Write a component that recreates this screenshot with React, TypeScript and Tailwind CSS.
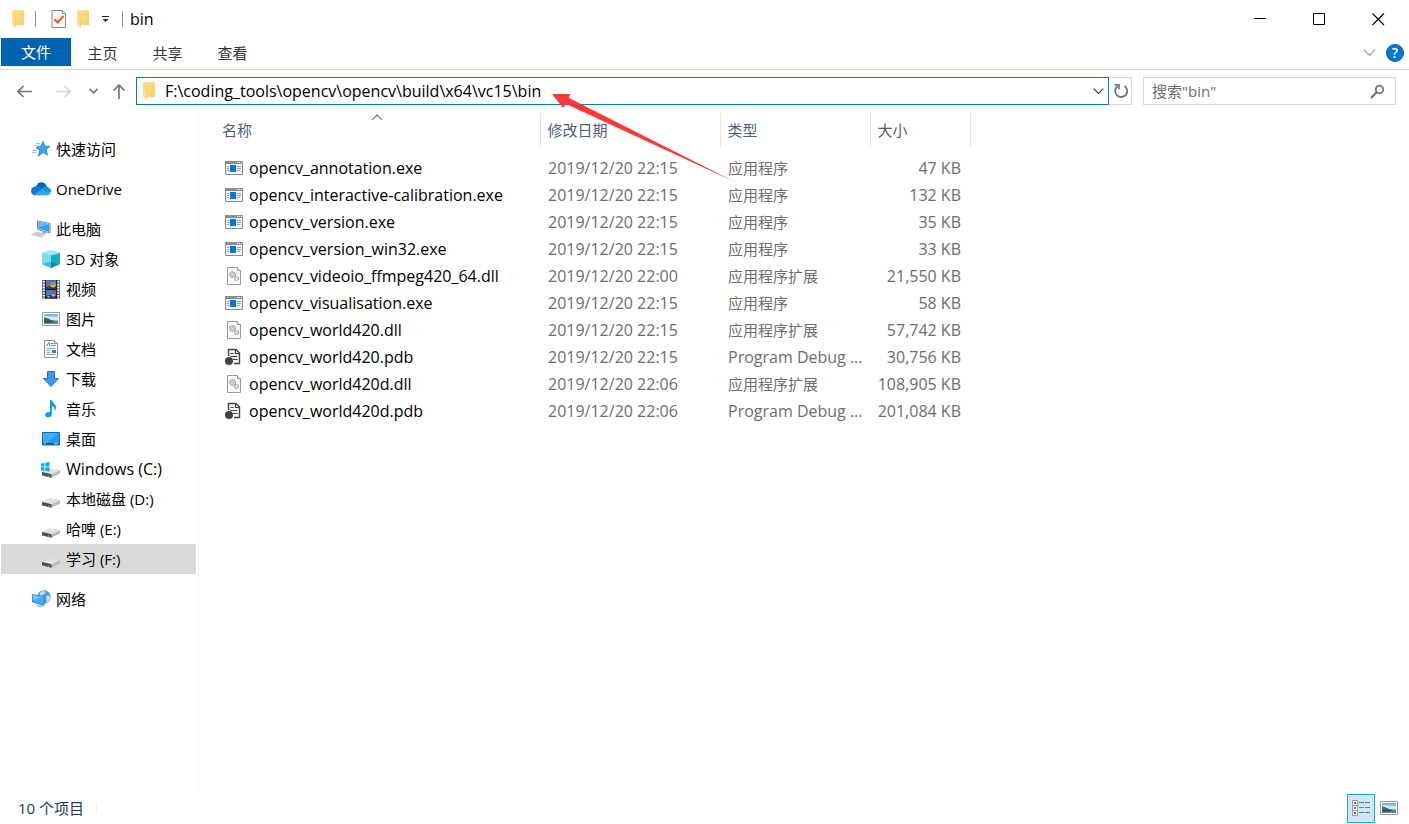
import React from 'react';

type IconProps = { className?: string };

const FolderIcon = ({ className = '' }: IconProps) => (
  <svg width="14" height="18" viewBox="0 0 14 18" className={`shrink-0 ${className}`} aria-hidden="true">
    <defs>
      <linearGradient id="folder-body" x1="0" y1="0" x2="1" y2="1">
        <stop offset="0" stopColor="#fde491" />
        <stop offset="1" stopColor="#f5cd68" />
      </linearGradient>
    </defs>
    <path d="M1 0h11l1 1v14H1z" fill="url(#folder-body)" />
    <path d="M1 0.5l2.5 2V8l1 1v8.5L1 15.5z" fill="#fbe093" />
    <path d="M3.5 2.5V8l1 1v8.5" fill="none" stroke="#edc45c" strokeWidth="0.6" />
  </svg>
);

const CheckDocIcon = () => (
  <svg width="16" height="18" viewBox="0 0 16 18" aria-hidden="true">
    <path d="M1 .5h10.5l3 3v14H1z" fill="#f7f7f7" stroke="#8b8b8b" />
    <path d="M11.500 .5v3h3" fill="#fff" stroke="#8b8b8b" />
    <path d="M3.500 9.300l3 3.200L12.500 6" fill="none" stroke="#f1571c" strokeWidth="2" />
  </svg>
);

const StarIcon = () => (
  <svg width="18" height="18" viewBox="0 0 18 18" aria-hidden="true">
    <path d="M11 1.500l1.800 4.700 5 .2-3.800 3.200 1.500 5.200-4.400-2.500-4.600 3.800 1.300-5.500L4.200 7.300l4.900-.7z" fill="#39aaf0" stroke="#1680c8" strokeWidth=".9" />
    <path d="M4 3.500h4M2 5.500h5M.5 10.500h5M0 12.500h4" stroke="#7fc4f3" strokeWidth=".9" />
  </svg>
);

const OneDriveIcon = () => (
  <svg width="20" height="14" viewBox="0 0 20 14" aria-hidden="true">
    <path d="M5 5C6 2 8-.1 10.500 .2c2.600 0 4.700 2 5.300 4.300L12 9z" fill="#0364b8" />
    <path d="M4.500 13.300C2 13.300 0 11.500 0 9c0-2.400 2-4.300 4.500-4.400C6 4 8 4.200 9.500 5.500L15 9z" fill="#0f78d4" />
    <path d="M9 8l4-3.200c1.500-.8 3.500-.4 4.500 1 1.800.6 2.700 1.900 2.500 4l-3 1z" fill="#1490df" />
    <path d="M2.500 12.900L10.800 7.200 19.700 10.500c-.4 1.800-1.700 2.800-3.700 2.800H4.500c-.8 0-1.400-.1-2-.4z" fill="#28a8ea" />
  </svg>
);

const ComputerIcon = () => (
  <svg width="20" height="18" viewBox="0 0 20 18" aria-hidden="true">
    <path d="M6.500 1l12.500 2.500v9.500L6.500 9.500z" fill="#fff" stroke="#6f7b85" strokeWidth=".9" />
    <path d="M7.300 2l11 2.200v7.700L7.300 8.800z" fill="#2fa0ee" />
    <path d="M7.300 2l11 2.200-11 3z" fill="#63bdf7" />
    <path d="M.5 14.500L5 12l9.500 2-4 3z" fill="#dfe3e6" stroke="#adb3b8" strokeWidth=".6" />
    <path d="M3 14.300l7.500 1.700M5 13.200l7.500 1.600" stroke="#9fa6ab" strokeWidth=".5" />
    <path d="M12 11.500l4 1-2 1.200-3-.7z" fill="#a8aeb3" />
  </svg>
);

const CubeIcon = () => (
  <svg width="18" height="18" viewBox="0 0 18 18" aria-hidden="true">
    <path d="M0 3l9-3 9 3v11l-9 4-9-4z" fill="#5fd0e4" />
    <path d="M0 3l9 2.500L18 3 9 0z" fill="#a5e8f2" />
    <path d="M0 3l9 2.500v6L0 14z" fill="#7bdcea" />
    <path d="M9 5.500L18 3v11l-9-2.500z" fill="#19abc9" />
    <path d="M0 14l9-2.500V18z" fill="#3fc0d8" />
    <path d="M9 11.500l9 2.500-9 4z" fill="#0e8daa" />
  </svg>
);

const VideoIcon = () => (
  <svg width="18" height="19" viewBox="0 0 18 19" aria-hidden="true">
    <path d="M0 0h18v19H0z" fill="#66696c" />
    <path d="M3.500 0v19M14.500 0v19" stroke="#1d1d1d" />
    <path d="M1.800 1v18M16.200 1v18" stroke="#fff" strokeWidth="1.800" strokeDasharray="1.600 1.200" />
    <path d="M4 1h10v8H4zM4 10h10v8.500H4z" fill="#3f7fdc" />
    <path d="M4 6.500l3-1 3 1.500 4-1V9H4zM4 16l4-1 6 1v2.500H4z" fill="#28386c" />
    <circle cx="11" cy="5" r="2.600" fill="#e3b51c" />
    <path d="M9.500 3.500h3v1.500h-3z" fill="#3fa04a" />
    <circle cx="6" cy="6" r="1.500" fill="#d74235" />
    <circle cx="12" cy="11.500" r="1.700" fill="#c73c2c" />
    <path d="M10 14.500h2.500v2H10zM5.500 16h2v1.500h-2z" fill="#e6bd2c" />
    <path d="M4 9.500h10" stroke="#171717" />
  </svg>
);

const PictureIcon = () => (
  <svg width="18" height="14" viewBox="0 0 18 14" aria-hidden="true">
    <path d="M.5 .5h17v13H.5z" fill="#fff" stroke="#9b9b9b" />
    <path d="M2 2h14v10H2z" fill="#7db4ee" />
    <path d="M2 4.500c3-1.500 5 .5 7 0s4 1 7 0V8H2z" fill="#d8eaf8" />
    <path d="M2 5.500c3 0 5 1.500 7.500 2.800L13 9H2z" fill="#44694f" />
    <path d="M2 9h14v3H2z" fill="#5e8797" />
    <path d="M2 9h8l3 .7-6 .8H2z" fill="#2c5045" />
  </svg>
);

const DocumentIcon = () => (
  <svg width="18" height="18" viewBox="0 0 18 18" aria-hidden="true">
    <path d="M2.500 .5h10l3 3v14h-13z" fill="#fdfdfd" stroke="#919191" />
    <path d="M12.500 .5v3h3" fill="#e6e6e6" stroke="#919191" />
    <path d="M4.500 6l2-3h1v3M9 3.500h2.500M9 5.500h4.500" stroke="#2c96d6" fill="none" />
    <path d="M4.500 8.500h9M4.500 10.500h4M4.500 12.500h4M4.500 14.500h9" stroke="#7eaec9" />
    <path d="M10 10h4v3h-4z" fill="#3c7dac" />
  </svg>
);

const DownloadIcon = () => (
  <svg width="18" height="18" viewBox="0 0 18 18" aria-hidden="true">
    <path d="M5.500 1.500h7v7h4L9 16.500 1.500 8.500h4z" fill="#3c98e8" stroke="#2476bf" />
  </svg>
);

const MusicIcon = () => (
  <svg width="18" height="18" viewBox="0 0 18 18" aria-hidden="true">
    <path d="M8 0h1.700c.3 2.600 4.500 4 4.300 7.500-.1 1.500-.6 2.600-1.400 3.500.3-2.800-.6-4.300-2.700-5v8c0 2-1.500 3.300-3.600 3.300-1.900 0-3.200-1-3.200-2.400 0-1.700 1.600-2.800 3.500-2.800.5 0 1 .1 1.400.2z" fill="#0d99f2" />
  </svg>
);

const DesktopIcon = () => (
  <svg width="18" height="14" viewBox="0 0 18 14" aria-hidden="true">
    <path d="M.5 .5h17v12.500H.5z" fill="#1b9cf4" stroke="#0f6cb5" />
    <path d="M1 1h15L5 11H1z" fill="#3eb0fb" />
    <path d="M1 11h16v1.500H1z" fill="#11507f" />
    <path d="M2 11.800h1.500M12 11.800h4" stroke="#fff" strokeWidth=".8" />
  </svg>
);

const DriveIcon = ({ system = false }: { system?: boolean }) => (
  <svg width="18" height="18" viewBox="0 0 18 18" aria-hidden="true">
    <path d="M0 12l8-3.500 10 1.800v3.200l-8.500 4.300L0 15.300z" fill="#b9bbbd" />
    <path d="M0 12l8-3.500 10 1.800-8.500 4z" fill="#e2e3e5" />
    <path d="M0 12l9.500 2.300v3.500L0 15.300z" fill="#4c4f51" />
    <path d="M6 15.200l2 .5v1l-2-.5z" fill="#37d04a" />
    {system && (
      <path d="M-1 3.500l3.500-.6v3.600H-1zM3.300 2.700L7.500 2v4.500H3.300zM-1 7.300h3.500v3.600L-1 10.300zM3.300 7.300h4.200v4.300l-4.200-.6z" fill="#00b3f0" />
    )}
  </svg>
);

const NetworkIcon = () => (
  <svg width="19" height="18" viewBox="0 0 19 18" aria-hidden="true">
    <circle cx="12" cy="7" r="6.800" fill="#4b9dcb" />
    <path d="M9 1.500c3-1.500 5 0 4.500 1.500s-3 1-3 3-3-1-3-2.500zM14 6c2-1 4-.5 4.500 1.500-.5 3-2.500 5-4 5.500z" fill="#b7deee" />
    <path d="M.5 4.500l11.500 2v9L.5 12z" fill="#3eaef6" stroke="#2a7eb8" strokeWidth=".8" />
    <path d="M1 5l10.500 1.900L1 10z" fill="#6ec6fa" />
    <path d="M4 15.500l3-1 4 1.500-3 1.500z" fill="#b0b5b9" />
  </svg>
);

const ExeIcon = () => (
  <svg width="18" height="14" viewBox="0 0 18 14" aria-hidden="true">
    <path d="M.5 .5h17v13H.5z" fill="#f5f5f5" stroke="#8a8d90" />
    <path d="M0 0h18v3H0z" fill="#8a8d90" />
    <path d="M12 1.500h1M14 1.500h1M16 1.500h1" stroke="#fff" />
    <path d="M5 4h6v7H5z" fill="#0078d7" />
    <path d="M2 5.500h2M2 7.500h2M2 9.500h2M12 5.500h4M12 7.500h4M12 9.500h3" stroke="#9a9da0" />
  </svg>
);

const DllIcon = () => (
  <svg width="18" height="18" viewBox="0 0 18 18" aria-hidden="true">
    <path d="M2.500 .5h10l3 3v14h-13z" fill="#f9f9f9" stroke="#9a9a9a" />
    <path d="M12.500 .5v3h3" fill="#fff" stroke="#9a9a9a" />
    <circle cx="7.500" cy="7.500" r="2.700" fill="none" stroke="#8d8d8d" strokeWidth="1.300" strokeDasharray="1.200 .5" />
    <circle cx="7.500" cy="7.500" r="1" fill="none" stroke="#8d8d8d" strokeWidth=".7" />
    <circle cx="11.500" cy="11.500" r="1.900" fill="#e2f0f9" stroke="#6ba9cf" strokeWidth="1.200" strokeDasharray="1.200 .4" />
  </svg>
);

const PdbIcon = () => (
  <svg width="18" height="18" viewBox="0 0 18 18" aria-hidden="true">
    <path d="M3.500 8V1.500h7.500L14.500 5v10.500H9" fill="#f3f3f3" stroke="#424242" strokeWidth="1.400" />
    <path d="M10.500 1.500V5.500h4" fill="none" stroke="#424242" strokeWidth="1.200" />
    <path d="M5.500 5.500h3M5.500 8.500h6.500M8 11.500h4.500" stroke="#424242" strokeWidth="1.200" />
    <circle cx="4" cy="13" r="4" fill="#424242" />
  </svg>
);

const Chevron = ({ className = '', size = 10 }: IconProps & { size?: number }) => (
  <svg width={size} height={size / 2 + 1} viewBox="0 0 10 6" className={className} aria-hidden="true">
    <path d="M.5 .5L5 5 9.500 .5" fill="none" stroke="currentColor" strokeWidth="1" />
  </svg>
);

const fileIcons = { exe: <ExeIcon />, dll: <DllIcon />, pdb: <PdbIcon /> };

const fileTypes = { exe: '应用程序', dll: '应用程序扩展', pdb: 'Program Debug ...' };

const files: { name: string; kind: keyof typeof fileTypes; date: string; size: string }[] = [
  { name: 'opencv_annotation.exe', kind: 'exe', date: '2019/12/20 22:15', size: '47 KB' },
  { name: 'opencv_interactive-calibration.exe', kind: 'exe', date: '2019/12/20 22:15', size: '132 KB' },
  { name: 'opencv_version.exe', kind: 'exe', date: '2019/12/20 22:15', size: '35 KB' },
  { name: 'opencv_version_win32.exe', kind: 'exe', date: '2019/12/20 22:15', size: '33 KB' },
  { name: 'opencv_videoio_ffmpeg420_64.dll', kind: 'dll', date: '2019/12/20 22:00', size: '21,550 KB' },
  { name: 'opencv_visualisation.exe', kind: 'exe', date: '2019/12/20 22:15', size: '58 KB' },
  { name: 'opencv_world420.dll', kind: 'dll', date: '2019/12/20 22:15', size: '57,742 KB' },
  { name: 'opencv_world420.pdb', kind: 'pdb', date: '2019/12/20 22:15', size: '30,756 KB' },
  { name: 'opencv_world420d.dll', kind: 'dll', date: '2019/12/20 22:06', size: '108,905 KB' },
  { name: 'opencv_world420d.pdb', kind: 'pdb', date: '2019/12/20 22:06', size: '201,084 KB' },
];

const places = [
  { label: '快速访问', icon: <StarIcon /> },
  { label: 'OneDrive', icon: <OneDriveIcon /> },
  {
    label: '此电脑',
    icon: <ComputerIcon />,
    children: [
      { label: '3D 对象', icon: <CubeIcon /> },
      { label: '视频', icon: <VideoIcon /> },
      { label: '图片', icon: <PictureIcon /> },
      { label: '文档', icon: <DocumentIcon /> },
      { label: '下载', icon: <DownloadIcon /> },
      { label: '音乐', icon: <MusicIcon /> },
      { label: '桌面', icon: <DesktopIcon /> },
      { label: 'Windows (C:)', icon: <DriveIcon system />, latin: true },
      { label: '本地磁盘 (D:)', icon: <DriveIcon /> },
      { label: '哈啤 (E:)', icon: <DriveIcon /> },
      { label: '学习 (F:)', icon: <DriveIcon />, selected: true },
    ],
  },
  { label: '网络', icon: <NetworkIcon /> },
];

const TitleBar = () => (
  <header className="flex h-[38px] items-center pl-[11px] pr-px">
    <FolderIcon />
    <span className="ml-2.5 h-4 w-px bg-[#8f8f8f]" />
    <button type="button" aria-label="属性" className="ml-[15px]">
      <CheckDocIcon />
    </button>
    <button type="button" aria-label="新建文件夹" className="ml-[9px]">
      <FolderIcon />
    </button>
    <button type="button" aria-label="自定义快速访问工具栏" className="ml-3">
      <svg width="8" height="8" viewBox="0 0 8 8" aria-hidden="true">
        <path d="M0 1.500h7" stroke="#222" />
        <path d="M.5 4h6L3.500 7z" fill="#222" />
      </svg>
    </button>
    <span className="ml-3 h-4 w-px bg-[#8f8f8f]" />
    <h1 className="ml-[7px] flex-1 text-base leading-5 text-black">bin</h1>
    <button type="button" aria-label="最小化" className="flex h-full w-[59px] items-center justify-center">
      <svg width="13" height="13" viewBox="0 0 13 13" aria-hidden="true">
        <path d="M0 5.500h12" stroke="#000" />
      </svg>
    </button>
    <button type="button" aria-label="最大化" className="flex h-full w-[59px] items-center justify-center">
      <svg width="13" height="13" viewBox="0 0 13 13" aria-hidden="true">
        <path d="M.5 .5h11v11H.5z" fill="none" stroke="#000" />
      </svg>
    </button>
    <button type="button" aria-label="关闭" className="flex h-full w-[59px] items-center justify-center">
      <svg width="13" height="13" viewBox="0 0 13 13" aria-hidden="true">
        <path d="M.5 .5l11.500 11.500M12 .5L.5 12" stroke="#000" strokeWidth="1.100" />
      </svg>
    </button>
  </header>
);

const Ribbon = () => (
  <nav className="flex h-8 items-start border-b border-[#dadbdc] pl-px pr-[5px] text-[#333]">
    <button type="button" className="h-7 w-[70px] bg-[#0063b1] text-white">文件</button>
    {['主页', '共享', '查看'].map((tab) => (
      <button key={tab} type="button" className="h-[30px] w-[65px] pr-0.5">{tab}</button>
    ))}
    <div className="flex h-[30px] flex-1 items-center justify-end gap-2.5">
      <button type="button" aria-label="展开功能区">
        <Chevron size={13} className="text-[#a6a6a6]" />
      </button>
      <button
        type="button"
        aria-label="帮助"
        className="flex size-[18px] items-center justify-center rounded-full border border-[#0b5ea5] bg-[#0078d7] text-sm leading-none font-semibold text-white"
      >
        ?
      </button>
    </div>
  </nav>
);

const AddressBar = () => (
  <div className="flex h-[42px] items-center pl-4 pr-[13px] text-[#777]">
    <button type="button" aria-label="后退">
      <svg width="17" height="14" viewBox="0 0 17 14" fill="none" aria-hidden="true">
        <path d="M16 7.500H2M7.500 2L2 7.500 7.500 13" stroke="#757575" strokeWidth="1.700" />
      </svg>
    </button>
    <button type="button" aria-label="前进" className="ml-[22px]">
      <svg width="17" height="14" viewBox="0 0 17 14" fill="none" aria-hidden="true">
        <path d="M1 7.500h14M9.500 2L15 7.500 9.500 13" stroke="#d6d6d6" strokeWidth="1.700" />
      </svg>
    </button>
    <button type="button" aria-label="最近浏览的位置" className="ml-[17px]">
      <svg width="9" height="6" viewBox="0 0 9 6" fill="none" aria-hidden="true">
        <path d="M.5 .8l4 4 4-4" stroke="#777" strokeWidth="1.700" />
      </svg>
    </button>
    <button type="button" aria-label="上移" className="ml-3.5">
      <svg width="14" height="16" viewBox="0 0 14 16" fill="none" aria-hidden="true">
        <path d="M7 16V2M1.500 7.500L7 2l5.500 5.500" stroke="#757575" strokeWidth="1.700" />
      </svg>
    </button>
    <div className="relative ml-2.5 flex h-7 flex-1 items-center border border-[#0078d7] pl-[5px] pr-1">
      <FolderIcon />
      <input
        aria-label="地址"
        defaultValue="F:\coding_tools\opencv\opencv\build\x64\vc15\bin"
        className="ml-[9px] min-w-0 flex-1 text-base leading-5 text-black outline-none"
      />
      <button type="button" aria-label="上一个位置">
        <Chevron className="text-[#333]" size={11} />
      </button>
      {/* callout arrow pointing at the path */}
      <svg width="184" height="90" viewBox="0 0 184 90" className="pointer-events-none absolute top-4 left-[415px] z-10" aria-hidden="true">
        <path d="M0 0L18 0 17 4 183 88 14 10 11 14z" fill="#fc3838" />
      </svg>
    </div>
    <button type="button" aria-label="刷新" className="flex h-7 w-[23px] items-center justify-center border border-l-0 border-[#d9d9d9] pl-px">
      <svg width="16" height="16" viewBox="0 0 16 16" fill="none" aria-hidden="true">
        <path d="M11.500 3A6 6 0 1 1 4.500 3.300" stroke="#757575" strokeWidth="1.900" />
        <path d="M1.500 1.800h4.500v4.500" stroke="#757575" strokeWidth="1.700" />
      </svg>
    </button>
    <div className="ml-[11px] flex h-7 w-[253px] items-center border border-[#d9d9d9] pl-2 pr-2.5">
      <input aria-label="搜索" placeholder={'搜索"bin"'} className="min-w-0 flex-1 outline-none placeholder:text-[#6d6d6d]" />
      <svg width="15" height="15" viewBox="0 0 15 15" fill="none" aria-hidden="true">
        <circle cx="9.500" cy="5.500" r="3.800" stroke="#757575" strokeWidth="1.800" />
        <path d="M7 8L1 14" stroke="#757575" strokeWidth="2.200" />
      </svg>
    </div>
  </div>
);

const Sidebar = () => (
  <nav className="w-[199px] shrink-0 border-r border-[#f0f0f0] pt-[22px] pl-px pr-0.5 text-black">
    <ul className="space-y-2.5">
      {places.map((place) => (
        <li key={place.label}>
          <a href="#" className="flex h-[30px] items-center gap-[5px] pl-[30px]">
            <span className="flex w-5 shrink-0 justify-center">{place.icon}</span>
            {place.label}
          </a>
          {place.children && (
            <ul>
              {place.children.map((child) => (
                <li key={child.label}>
                  <a
                    href="#"
                    className={`flex h-[30px] items-center gap-1.5 pl-[41px] ${'selected' in child ? 'bg-[#d9d9d9]' : ''} ${'latin' in child ? 'text-base leading-5' : ''}`}
                  >
                    <span className="w-[18px] shrink-0 [&>svg]:overflow-visible">{child.icon}</span>
                    {child.label}
                  </a>
                </li>
              ))}
            </ul>
          )}
        </li>
      ))}
    </ul>
  </nav>
);

const FileList = () => (
  <main className="min-w-0 flex-1 pt-px pl-[15px]">
    <table className="w-[756px] table-fixed text-[#6d6d6d]">
      <colgroup>
        <col className="w-[326px]" />
        <col className="w-[180px]" />
        <col className="w-[150px]" />
        <col className="w-[100px]" />
      </colgroup>
      <thead>
        <tr className="h-[34px] text-left text-[#4c607a] [&>th]:border-r [&>th]:border-[#e5e5e5] [&>th]:px-[7px] [&>th]:font-normal">
          <th className="relative">
            <span className="pl-px">名称</span>
            <Chevron size={11} className="absolute top-px left-1/2 -translate-x-1/2 rotate-180 text-[#6d6d6d]" />
          </th>
          <th>修改日期</th>
          <th>类型</th>
          <th>大小</th>
        </tr>
      </thead>
      <tbody className="before:block before:h-[7px] before:content-['']">
        {files.map((file) => (
          <tr key={file.name} className="h-[27px] whitespace-nowrap">
            <td className="pl-[11px] text-base leading-5">
              <div className="flex items-center gap-1.5 text-black">
                <span className="w-[18px] shrink-0">{fileIcons[file.kind]}</span>
                {file.name}
              </div>
            </td>
            <td className="pl-2 text-base leading-5">{file.date}</td>
            <td className={file.kind === 'pdb' ? 'pl-2 text-base leading-5' : 'pl-2'}>{fileTypes[file.kind]}</td>
            <td className="pr-[9px] text-right text-base leading-5">{file.size}</td>
          </tr>
        ))}
      </tbody>
    </table>
  </main>
);

const StatusBar = () => (
  <footer className="flex h-8 items-center pl-[18px] pr-2.5 text-[#1e395b]">
    <span>10 个项目</span>
    <span className="ml-3 h-3 w-px bg-[#f0f0f0]" />
    <div className="ml-auto flex items-center gap-[5px]">
      <button type="button" aria-label="详细信息" className="flex h-[29px] w-7 items-center justify-center border border-[#26a0da] bg-[#cbe8f6]">
        <svg width="18" height="16" viewBox="0 0 18 16" aria-hidden="true">
          <path d="M.5 .5h5v5h-5zM.5 5.500h5v5h-5zM.5 10.500h5v5h-5z" fill="#fff" stroke="#999" />
          <path d="M2 2h2v2H2z" fill="#3d79a8" />
          <path d="M2 7h2v2H2z" fill="#6d7f2f" />
          <path d="M2 12h2v2H2z" fill="#c2371f" />
          <path d="M7 2.500h5M13 2.500h5M7 7.500h5M13 7.500h5M7 12.500h5M13 12.500h5" stroke="#777" />
        </svg>
      </button>
      <button type="button" aria-label="大缩略图" className="mr-px">
        <PictureIcon />
      </button>
    </div>
  </footer>
);

const App = () => {
  return (
    <div className="flex min-h-screen flex-col bg-white font-['Open_Sans','Noto_Sans_CJK_SC',sans-serif] text-[15px] leading-5">
      <TitleBar />
      <Ribbon />
      <AddressBar />
      <div className="flex flex-1">
        <Sidebar />
        <FileList />
      </div>
      <StatusBar />
    </div>
  );
};

export default App;
